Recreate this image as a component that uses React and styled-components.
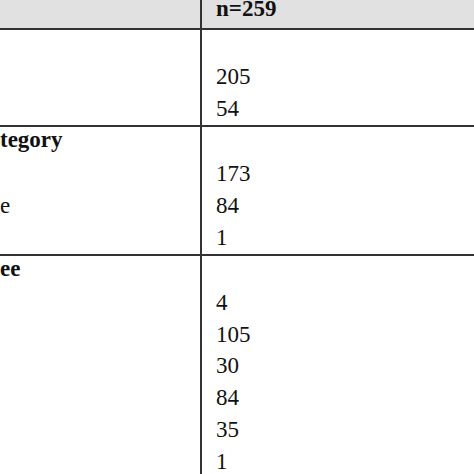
import React from "react";
import styled, { createGlobalStyle } from "styled-components";

const GlobalStyle = createGlobalStyle`
  html, body {
    margin: 0;
    padding: 0;
    background: #ffffff;
  }
  body {
    font-family: "Liberation Serif", "Times New Roman", serif;
    color: #111111;
    overflow: hidden;
  }
`;

const Table = styled.div`
  width: 474px;
  height: 474px;
  overflow: hidden;
  font-size: 23px;
`;

const HeaderRow = styled.div`
  display: grid;
  grid-template-columns: 202px 1fr;
  height: 28px;
  background: #e1e1e1;
  border-bottom: 2px solid #333333;
`;

const Row = styled.div`
  display: grid;
  grid-template-columns: 202px 1fr;
  border-top: ${({ $first }) => ($first ? "none" : "2px solid #333333")};
`;

const Cell = styled.div`
  box-sizing: border-box;
  padding-left: ${({ $right }) => ($right ? "14px" : "0")};
  border-right: ${({ $right }) => ($right ? "none" : "2px solid #333333")};
  min-width: 0;
  white-space: nowrap;
  overflow: hidden;
`;

const HeadText = styled.div`
  font-weight: bold;
  line-height: 18.5px;
`;

const Label = styled.div`
  font-weight: bold;
  height: 26.5px;
  line-height: 26.5px;
`;

const Lines = styled.div`
  margin-top: 4.8px;
`;

const Line = styled.div`
  height: 31.8px;
  line-height: 31.8px;
`;

const rows = [
  { label: "", sub: ["", ""], values: ["205", "54"] },
  { label: "tegory", sub: ["", "e", ""], values: ["173", "84", "1"] },
  { label: "ee", sub: ["", "", "", "", "", ""], values: ["4", "105", "30", "84", "35", "1"] },
];

export default function App() {
  return (
    <>
      <GlobalStyle />
      <Table>
        <HeaderRow>
          <Cell />
          <Cell $right>
            <HeadText>n=259</HeadText>
          </Cell>
        </HeaderRow>
        {rows.map((row, i) => (
          <Row key={i} $first={i === 0}>
            <Cell>
              <Label>{row.label}</Label>
              <Lines>
                {row.sub.map((s, j) => (
                  <Line key={j}>{s}</Line>
                ))}
              </Lines>
            </Cell>
            <Cell $right>
              <Label />
              <Lines>
                {row.values.map((v, j) => (
                  <Line key={j}>{v}</Line>
                ))}
              </Lines>
            </Cell>
          </Row>
        ))}
      </Table>
    </>
  );
}
